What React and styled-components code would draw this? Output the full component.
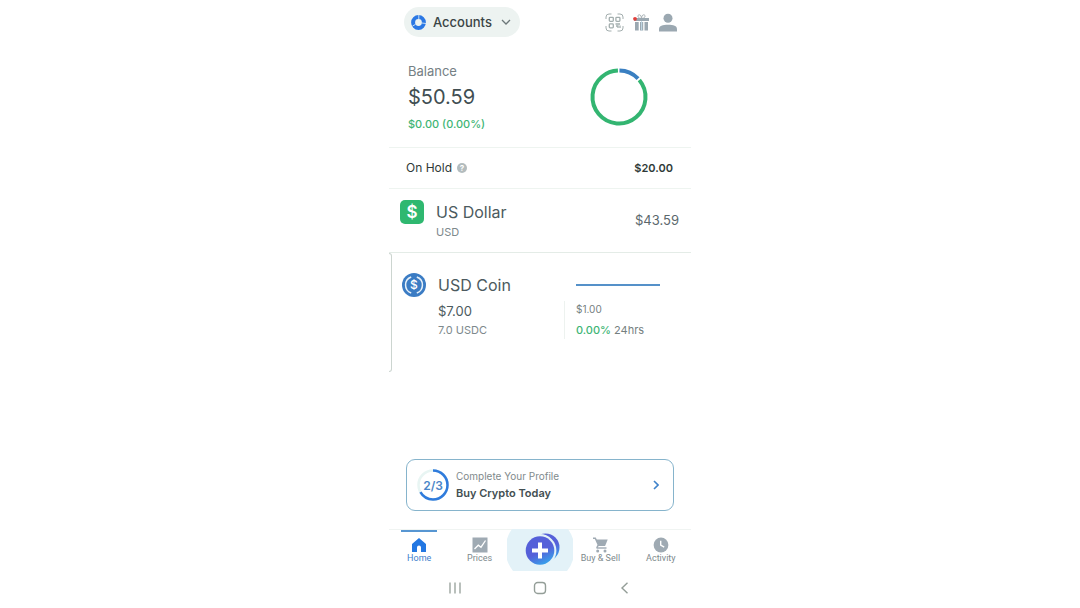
import React from 'react';
import styled, { createGlobalStyle } from 'styled-components';

const GlobalStyle = createGlobalStyle`
  * {
    box-sizing: border-box;
  }
  body {
    margin: 0;
    background-color: #fff;
    color: #4c5a5e;
    font-family: Inter, 'Liberation Sans', sans-serif;
  }
  h1, h2, p {
    margin: 0;
    font-weight: 400;
  }
  svg {
    display: block;
  }
`;

const Screen = styled.div`
  display: flex;
  flex-direction: column;
  width: 100%;
  max-width: 302px;
  min-height: 100vh;
  margin: 0 auto;
`;

const Header = styled.header`
  display: flex;
  justify-content: space-between;
  align-items: center;
  padding: 7px 14px 7px 15px;
`;

const AccountsButton = styled.button`
  display: flex;
  align-items: center;
  gap: 7px;
  height: 30px;
  padding: 0 9px 0 7px;
  border: none;
  border-radius: 15px;
  background-color: #edf3f1;
  color: #3a4446;
  font-family: inherit;
  font-size: 13px;
  font-weight: 500;
  cursor: pointer;
  svg:last-child {
    margin-left: 2px;
  }
`;

const HeaderActions = styled.div`
  display: flex;
  align-items: center;
  gap: 9px;
`;

const IconButton = styled.button`
  padding: 0;
  border: none;
  background: none;
  cursor: pointer;
`;

const Summary = styled.section`
  display: flex;
  justify-content: space-between;
  align-items: flex-start;
  padding: 17px 42px 12px 19px;
`;

const SummaryLabel = styled.h1`
  color: #758084;
  font-size: 13px;
  line-height: 20px;
`;

const Balance = styled.p`
  color: #414e52;
  font-size: 20px;
  line-height: 32px;
`;

const Change = styled.p`
  color: #3eb575;
  font-size: 11px;
  font-weight: 500;
  line-height: 22px;
`;

const Ring = styled.svg`
  width: 60px;
  height: 60px;
  margin-top: 6px;
`;

const HoldRow = styled.section`
  display: flex;
  justify-content: space-between;
  align-items: center;
  padding: 10px 18px 10px 17px;
  border-top: 1px solid #eef4f0;
  border-bottom: 1px solid #eef4f0;
  color: #2f3a38;
  line-height: 20px;
`;

const HoldLabel = styled.h2`
  display: flex;
  align-items: center;
  gap: 5px;
  font-size: 12px;
`;

const HoldAmount = styled.span`
  font-size: 11px;
  font-weight: 600;
`;

const HelpButton = styled.button`
  width: 10px;
  height: 10px;
  padding: 0;
  border: none;
  border-radius: 50%;
  background-color: #b3bcbe;
  color: #fff;
  font-family: inherit;
  font-size: 8px;
  font-weight: 700;
  line-height: 10px;
  cursor: pointer;
`;

const AssetRow = styled.section`
  display: flex;
  align-items: flex-start;
  padding: 11px 12px 12px 11px;
  border-bottom: 1px solid #e4ece7;
`;

const DollarBadge = styled.div`
  width: 24px;
  height: 24px;
  margin-right: 12px;
  border-radius: 5px;
  background-color: #2fb870;
  color: #fff;
  font-size: 17px;
  font-weight: 600;
  line-height: 24px;
  text-align: center;
`;

const AssetText = styled.div`
  flex: 1;
`;

const AssetName = styled.h2`
  font-size: 16px;
  line-height: 24px;
`;

const AssetCode = styled.p`
  color: #7d898c;
  font-size: 11px;
  line-height: 16px;
`;

const AssetValue = styled.p`
  align-self: center;
  color: #5b686c;
  font-size: 13px;
`;

const CoinRow = styled.section`
  display: flex;
  align-items: stretch;
`;

const CoinEdge = styled.div`
  width: 3px;
  border: 1px solid #ccd5d0;
  border-left: none;
  border-radius: 0 4px 4px 0;
`;

const CoinBody = styled.div`
  flex: 1;
  display: flex;
  align-items: flex-start;
  padding: 20px 31px 33px 10px;
`;

const CoinText = styled.div`
  flex: 1;
  margin-left: 12px;
`;

const CoinValue = styled.p`
  margin-top: 4px;
  font-size: 13px;
  line-height: 20px;
`;

const CoinAmount = styled.p`
  margin-top: 1px;
  color: #7d898c;
  font-size: 11px;
  line-height: 16px;
`;

const CoinPrice = styled.div`
  display: flex;
  flex-direction: column;
  width: 96px;
`;

const PriceLine = styled.svg`
  width: 84px;
  height: 2px;
  margin: 11px 0 15px 12px;
`;

const PriceDetails = styled.div`
  padding-left: 11px;
  border-left: 1px solid #edf2ef;
  color: #75807f;
`;

const Price = styled.p`
  font-size: 10px;
  line-height: 16px;
`;

const PriceChange = styled.p`
  margin-top: 4px;
  font-size: 11px;
  line-height: 18px;
  span {
    color: #3eb575;
    font-weight: 500;
  }
`;

const ProfileCard = styled.a`
  display: flex;
  align-items: center;
  margin: auto 17px 18px;
  padding: 8px 14px 8px 10px;
  border: 1px solid #86b4cc;
  border-radius: 9px;
  text-decoration: none;
`;

const ProfileText = styled.div`
  flex: 1;
  margin-left: 7px;
`;

const ProfileTitle = styled.p`
  color: #7f8a8c;
  font-size: 10px;
  line-height: 16px;
`;

const ProfileAction = styled.p`
  color: #434f52;
  font-size: 11px;
  font-weight: 600;
  line-height: 18px;
`;

const TabBar = styled.nav`
  display: grid;
  grid-template-columns: repeat(5, minmax(0, 1fr));
  border-top: 1px solid #f0f4f2;
`;

const Tab = styled.a`
  display: flex;
  flex-direction: column;
  align-items: center;
  color: ${({ $active }) => ($active ? '#3f80cc' : '#7d898c')};
  font-family: Roboto, 'Liberation Sans', sans-serif;
  font-size: 9px;
  line-height: 11px;
  text-decoration: none;
  white-space: nowrap;
  &::before {
    content: '';
    width: 36px;
    height: 2px;
    margin-bottom: 5px;
    background-color: ${({ $active }) => ($active ? '#5796d2' : 'transparent')};
  }
`;

const TradeButton = styled.button`
  display: flex;
  justify-content: center;
  margin-top: -1px;
  padding: 0;
  border: none;
  background: none;
  cursor: pointer;
  svg {
    flex: none;
  }
`;

const SystemBar = styled.div`
  display: flex;
  justify-content: space-between;
  align-items: center;
  height: 37px;
  padding: 0 59px 3px;
`;

const navIcons = {
  home: (
    <svg width='16' height='16' viewBox='0 0 16 16'>
      <path d='M8 1 15 7v8h-5v-4.500a2 2 0 0 0-4 0V15H1V7z' fill='#2377e2' />
    </svg>
  ),
  prices: (
    <svg width='16' height='16' viewBox='0 0 16 16'>
      <rect x='.5' y='.5' width='15' height='15' fill='#9faab3' />
      <path d='m2.500 12 3.800-3.800 2.700 2L13.500 3.500' fill='none' stroke='#fff' strokeWidth='1.300' />
    </svg>
  ),
  cart: (
    <svg width='16' height='16' viewBox='0 0 16 16'>
      <path d='M1 1.200h2.300l3.200 7h6.500M4.800 10.800l1.400-2.600' fill='none' stroke='#9faab3' strokeWidth='1.500' />
      <path d='M3.700 2.400h12l-2.500 6.300H6.500z' fill='#9faab3' />
      <path d='M4.500 11h10' stroke='#9faab3' strokeWidth='1.400' />
      <circle cx='5.700' cy='14' r='1.500' fill='#9faab3' />
      <circle cx='13' cy='14' r='1.500' fill='#9faab3' />
    </svg>
  ),
  clock: (
    <svg width='16' height='16' viewBox='0 0 16 16'>
      <circle cx='8' cy='8' r='7.400' fill='#9faab3' />
      <path d='M7.700 3.800v4.400l3.500 1.900' fill='none' stroke='#fff' strokeWidth='1.400' />
    </svg>
  ),
};

function AccountsIcon() {
  return (
    <svg width='15' height='15' viewBox='0 0 15 15'>
      <circle cx='7.500' cy='7.500' r='5.400' fill='none' stroke='#2b78e4' strokeWidth='4' />
      <path d='M7.800 0v4M15 8.500l-4-.5M1.500 11l3-1.600' stroke='#d5e6f5' strokeWidth='.9' />
    </svg>
  );
}

function ScanIcon() {
  return (
    <svg width='19' height='19' viewBox='0 0 19 19' fill='none' stroke='#a3aeae' strokeWidth='1'>
      <path d='M1 6V4a3 3 0 0 1 3-3h2.500M12.500 1H15a3 3 0 0 1 3 3v2M18 13v2a3 3 0 0 1-3 3h-2.500M6.500 18H4a3 3 0 0 1-3-3v-2' />
      <g strokeWidth='1.300'>
        <rect x='4.300' y='4.300' width='4' height='4' rx='.8' />
        <rect x='10.900' y='4.300' width='4' height='4' rx='.8' />
        <rect x='4.300' y='10.900' width='4' height='4' rx='.8' />
        <path d='M10.500 11h4.500M11 13h2v2M15 12.500v2.500' />
      </g>
    </svg>
  );
}

function GiftIcon() {
  return (
    <svg width='17' height='17' viewBox='0 0 17 17'>
      <path d='M8.500 4.500C4.500 4.500 4 .8 6.300.8c1.500 0 2.200 2 2.200 3.700 0-1.700.7-3.700 2.200-3.700 2.300 0 1.800 3.700-2.200 3.700z' fill='none' stroke='#a8b1b5' strokeWidth='1' />
      <path d='M1 4h15v3H1z M2 8h3.700v8.500H2zM7 8h3.200v8.500H7zM11.500 8H15v8.500h-3.500z' fill='#9ba8b1' />
      <path d='M8.600 7v9.500' stroke='#c3dbe8' strokeWidth='1' />
      <circle cx='2' cy='4.800' r='1.900' fill='#e2403c' />
    </svg>
  );
}

function ProfileIcon() {
  return (
    <svg width='18' height='19' viewBox='0 0 18 19'>
      <circle cx='9' cy='5.200' r='4.500' fill='#9ba8b1' />
      <path d='M0 18.500v-2.300C0 13 3.500 11.800 9 11.800s9 1.200 9 4.400v2.300z' fill='#9ba8b1' />
    </svg>
  );
}

// Portfolio split, starting from twelve o'clock
function BalanceRing() {
  return (
    <Ring viewBox='0 0 60 60' fill='none' strokeWidth='4'>
      <circle
        cx='30'
        cy='30'
        r='26.500'
        stroke='#3a7fc1'
        pathLength='100'
        strokeDasharray='12.500 87.500'
        transform='rotate(-89 30 30)'
      />
      <circle
        cx='30'
        cy='30'
        r='26.500'
        stroke='#33b571'
        pathLength='100'
        strokeDasharray='85.500 14.500'
        transform='rotate(-40 30 30)'
      />
    </Ring>
  );
}

function CoinIcon() {
  return (
    <svg width='24' height='24' viewBox='0 0 24 24'>
      <circle cx='12' cy='12' r='12' fill='#3b7cc4' />
      <path d='M9.200 4a8.500 8.500 0 0 0 0 16M14.800 4a8.500 8.500 0 0 1 0 16' fill='none' stroke='#e6f1fa' strokeWidth='1.500' />
      <text x='12' y='16.300' textAnchor='middle' fontSize='12' fontWeight='500' fill='#fff'>$</text>
    </svg>
  );
}

function TradeIcon() {
  return (
    <svg width='66' height='42' viewBox='0 0 66 42'>
      <defs>
        <linearGradient id='disc' x1='.3' y1='.2' x2='.7' y2='1'>
          <stop offset='.45' stopColor='#5560d9' />
          <stop offset='1' stopColor='#36a5ec' />
        </linearGradient>
      </defs>
      <path d='M5 0h56a35 35 0 0 1-1 42H6A35 35 0 0 1 5 0z' fill='#e3f2f8' />
      <circle cx='38.500' cy='18.500' r='14' fill='url(#disc)' />
      <circle cx='33' cy='21.500' r='16.400' fill='#e3f2f8' />
      <circle cx='33' cy='21.500' r='14.300' fill='url(#disc)' />
      <path d='M33 13.500v16M25 21.500h16' stroke='#fff' strokeWidth='4' />
    </svg>
  );
}

function ProgressRing() {
  return (
    <svg width='32' height='32' viewBox='0 0 32 32'>
      <circle cx='16' cy='16' r='14.500' fill='none' stroke='#e8f5f3' strokeWidth='2.500' />
      <circle
        cx='16'
        cy='16'
        r='14.500'
        fill='none'
        stroke='#2f7bdc'
        strokeWidth='2.500'
        pathLength='3'
        strokeDasharray='2 1'
        transform='rotate(-90 16 16)'
      />
      <text x='16' y='20.500' textAnchor='middle' fontSize='12' fontWeight='600' fill='#4a86c8'>2/3</text>
    </svg>
  );
}

function App() {
  return (
    <>
      <GlobalStyle />
      <Screen>
        <Header>
          <AccountsButton>
            <AccountsIcon />
            Accounts
            <svg width='10' height='6' viewBox='0 0 10 6'>
              <path d='m1 1 4 4 4-4' fill='none' stroke='#6c7779' strokeWidth='1.300' />
            </svg>
          </AccountsButton>
          <HeaderActions>
            <IconButton aria-label='Scan code'><ScanIcon /></IconButton>
            <IconButton aria-label='Rewards'><GiftIcon /></IconButton>
            <IconButton aria-label='Profile'><ProfileIcon /></IconButton>
          </HeaderActions>
        </Header>

        <Summary>
          <div>
            <SummaryLabel>Balance</SummaryLabel>
            <Balance>$50.59</Balance>
            <Change>$0.00 (0.00%)</Change>
          </div>
          <BalanceRing />
        </Summary>

        <HoldRow>
          <HoldLabel>
            On Hold
            <HelpButton>?</HelpButton>
          </HoldLabel>
          <HoldAmount>$20.00</HoldAmount>
        </HoldRow>

        <AssetRow>
          <DollarBadge>$</DollarBadge>
          <AssetText>
            <AssetName>US Dollar</AssetName>
            <AssetCode>USD</AssetCode>
          </AssetText>
          <AssetValue>$43.59</AssetValue>
        </AssetRow>

        <CoinRow>
          <CoinEdge />
          <CoinBody>
            <CoinIcon />
            <CoinText>
              <AssetName>USD Coin</AssetName>
              <CoinValue>$7.00</CoinValue>
              <CoinAmount>7.0 USDC</CoinAmount>
            </CoinText>
            <CoinPrice>
              <PriceLine viewBox='0 0 84 2' preserveAspectRatio='none'>
                <path d='M0 1h84' stroke='#5591c9' strokeWidth='2' />
              </PriceLine>
              <PriceDetails>
                <Price>$1.00</Price>
                <PriceChange><span>0.00%</span> 24hrs</PriceChange>
              </PriceDetails>
            </CoinPrice>
          </CoinBody>
        </CoinRow>

        <ProfileCard href='#profile'>
          <ProgressRing />
          <ProfileText>
            <ProfileTitle>Complete Your Profile</ProfileTitle>
            <ProfileAction>Buy Crypto Today</ProfileAction>
          </ProfileText>
          <svg width='6' height='10' viewBox='0 0 6 10'>
            <path d='m1 1 4 4-4 4' fill='none' stroke='#3f83cb' strokeWidth='1.600' />
          </svg>
        </ProfileCard>

        <TabBar>
          <Tab href='#home' $active>{navIcons.home}Home</Tab>
          <Tab href='#prices'>{navIcons.prices}Prices</Tab>
          <TradeButton aria-label='Trade'><TradeIcon /></TradeButton>
          <Tab href='#trade'>{navIcons.cart}Buy &amp; Sell</Tab>
          <Tab href='#activity'>{navIcons.clock}Activity</Tab>
        </TabBar>

        <SystemBar>
          <IconButton aria-label='Recent apps'>
            <svg width='14' height='12' viewBox='0 0 14 12'>
              <path d='M2 .5v11M7 .5v11M12 .5v11' stroke='#949e98' strokeWidth='1.300' />
            </svg>
          </IconButton>
          <IconButton aria-label='Home screen'>
            <svg width='14' height='14' viewBox='0 0 14 14'>
              <rect x='1.500' y='1.500' width='11' height='11' rx='3.200' fill='none' stroke='#949e98' strokeWidth='1.400' />
            </svg>
          </IconButton>
          <IconButton aria-label='Back'>
            <svg width='14' height='12' viewBox='0 0 14 12'>
              <path d='M9.500.8 4 6l5.500 5.200' fill='none' stroke='#949e98' strokeWidth='1.400' />
            </svg>
          </IconButton>
        </SystemBar>
      </Screen>
    </>
  );
}

export default App;
